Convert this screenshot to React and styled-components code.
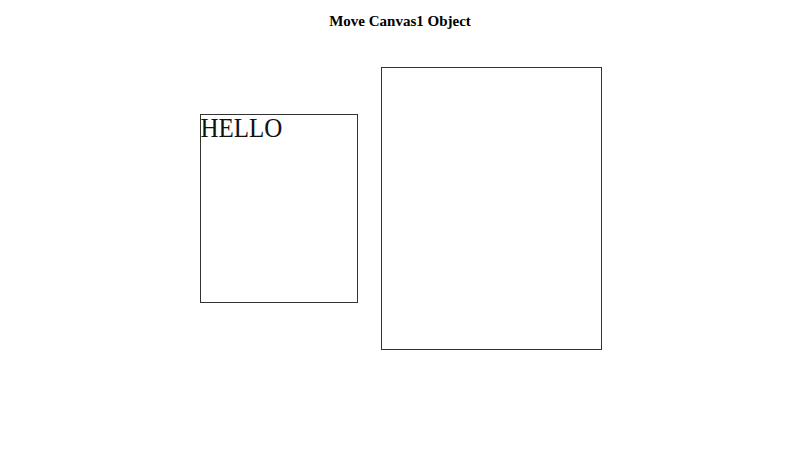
import React from "react";
import styled, { createGlobalStyle } from "styled-components";

const GlobalStyle = createGlobalStyle`
  html, body {
    margin: 0;
    padding: 0;
    background: #fff;
    font-family: "Liberation Serif", "Times New Roman", serif;
    color: #000;
  }
`;

const Page = styled.div`
  width: 800px;
  height: 450px;
  display: flex;
  flex-direction: column;
  align-items: center;
`;

const Title = styled.h3`
  margin: 11px 0 0;
  font-size: 15px;
  line-height: 20px;
  font-weight: bold;
`;

const Row = styled.div`
  display: flex;
  align-items: center;
  gap: 23px;
  margin-top: 36px;
  padding-left: 1px;
`;

const Canvas = styled.div`
  box-sizing: border-box;
  width: ${({ $w }) => $w}px;
  height: ${({ $h }) => $h}px;
  border: 1px solid #333;
  background: #fff;
`;

const Hello = styled.div`
  font-family: "Liberation Serif", "Times New Roman", serif;
  font-size: 25px;
  line-height: 25px;
  color: #111;
  transform: scaleY(1.1);
  transform-origin: 0 0;
  margin-top: -1px;
`;

const App = () => {
  return (
    <Page>
      <GlobalStyle />
      <Title>Move Canvas1 Object</Title>
      <Row>
        <Canvas $w={158} $h={189}>
          <Hello>HELLO</Hello>
        </Canvas>
        <Canvas $w={221} $h={283} />
      </Row>
    </Page>
  );
};

export default App;
